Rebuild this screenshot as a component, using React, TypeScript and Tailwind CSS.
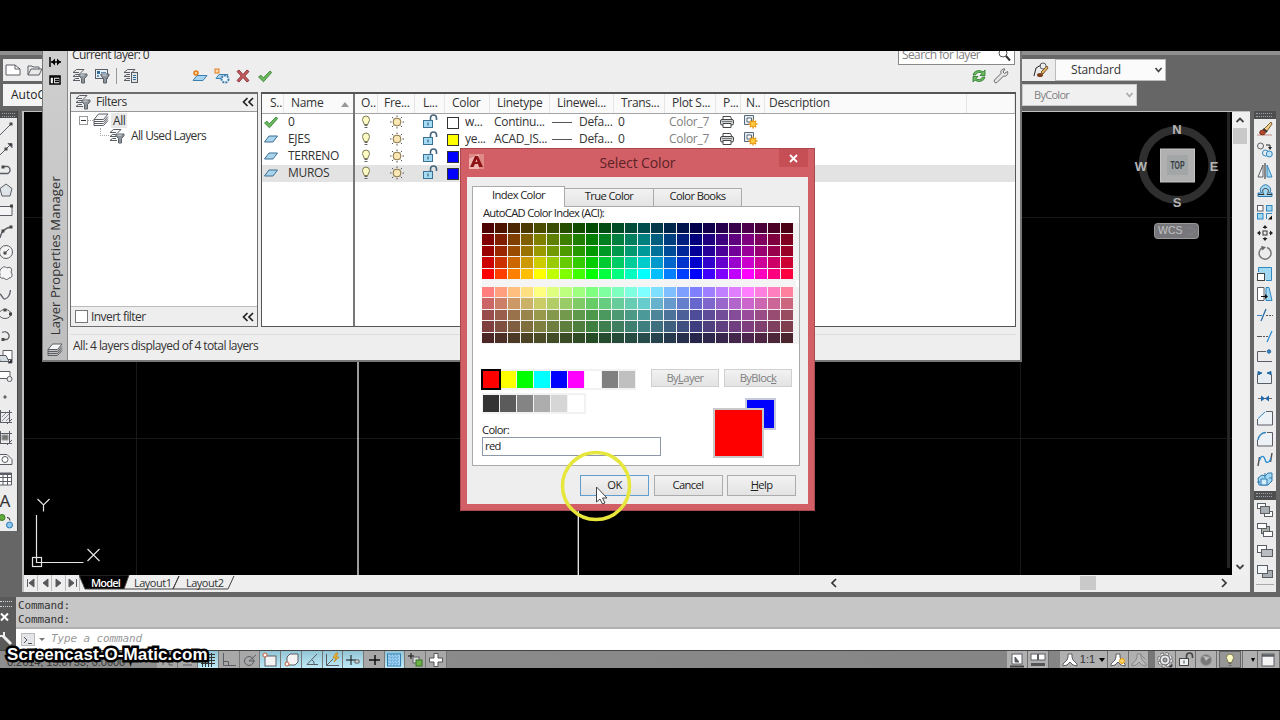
import React from 'react';
import clsx from 'clsx';

type IcoProps = { children: React.ReactNode; className?: string; w?: number; h?: number };

const Ico: React.FC<IcoProps> = ({ children, className, w = 16, h = 16 }) => (
    <svg width={w} height={h} viewBox={`0 0 ${w} ${h}`} fill="none" stroke="#5a5e64" strokeWidth="1" className={clsx('block shrink-0', className)}>
        {children}
    </svg>
);

// ---------- shared icons ----------

const Funnel = ({ x = 0, y = 0 }) => (
    <g transform={`translate(${x} ${y})`}>
        <path d="M1 1.5h8v1.800L6.500 6v4.500h-3V6L1 3.300z" fill="#8d949b" stroke="#5c6268" />
        <path d="M2.500 2.500h4" stroke="#dfe3e6" />
    </g>
);

const LayerFilter = () => (
    <Ico>
        <path d="M1 4.500L4.500 1.500H12L8.500 5M1 4.500h6M1 8.500l2.500-2H7M1 8.500h6M1 12.500l2.500-2H7M1 12.500h7" />
        <Funnel x={6} y={4.500} />
    </Ico>
);

const GroupFilter = () => (
    <Ico>
        <rect x="1.500" y="1.500" width="12" height="9" fill="#e8f1f8" />
        <rect x="3" y="3" width="3" height="3" fill="#2f6f9f" stroke="none" />
        <rect x="3" y="7" width="2" height="2" fill="#5f8fb5" stroke="none" />
        <path d="M7 4.500h5" stroke="#5f8fb5" />
        <Funnel x={6} y={4.500} />
    </Ico>
);

const LayerStates = () => (
    <Ico>
        <path d="M1 4.500L4.500 1.500H12L8.500 5M1 4.500h6M1 8.500l2.500-2H7M1 8.500h6M1 12.500l2.500-2H7M1 12.500h6" />
        <rect x="8.500" y="4.500" width="6" height="10" fill="#dfe3e6" />
        <path d="M10 7.500h3M10 9.500h3M10 11.500h3" stroke="#2f6f9f" />
    </Ico>
);

const NewLayer = () => (
    <Ico>
        <path d="M1 12.500l4-5h10l-4 5z" fill="#a6d3ef" stroke="#3f7fae" />
        <circle cx="4" cy="5" r="2" fill="#ffd08a" stroke="#e07b1f" strokeWidth="1.500" />
    </Ico>
);

const NewVpLayer = () => (
    <Ico>
        <rect x="1" y="1" width="4" height="4" fill="#ffd9a8" stroke="#e07b1f" />
        <path d="M2 10.500l3-4h9l-3 4z" fill="#a6d3ef" stroke="#3f7fae" />
        <circle cx="11" cy="11" r="3.500" fill="#eef6fb" stroke="#3f7fae" strokeDasharray="2 1" strokeWidth="2" />
    </Ico>
);

const RedCross = () => (
    <Ico>
        <path d="M2 3.500L4 2l4 4.500L12 2l2 1.500L9.800 8l4.200 4.500-2 1.500-4-4.500L4 14l-2-1.500L6.200 8z" fill="#c45a5e" stroke="#8e3a40" />
    </Ico>
);

const Check = () => (
    <Ico>
        <path d="M1.500 9L4 7.200l2.300 2.600L13 3l1.700 1.400L6.500 13.800z" fill="#6cb85f" stroke="#2f7d2c" strokeWidth=".8" />
    </Ico>
);

const LayerSheet = () => (
    <Ico h={10}>
        <path d="M1.500 8l4.500-6h8.500L10 8z" fill="#a8d4ee" stroke="#3f6f92" />
    </Ico>
);

const Bulb = () => (
    <Ico w={10} h={14}>
        <path d="M5 1a3.600 3.600 0 0 0-3.500 3.600c0 2 1.500 2.700 1.700 4.900h3.600c.2-2.200 1.700-2.900 1.700-4.900A3.600 3.600 0 0 0 5 1z" fill="#fdfbc4" stroke="#7d7a55" />
        <path d="M3.500 10.500h3M3.500 12.500h3" stroke="#666" />
    </Ico>
);

const Sun = () => (
    <Ico w={14} h={14}>
        <path d="M7 .5v1.500M7 12v1.500M0 7h1.500M12.500 7H14M2 2l1.300 1.300M10.700 10.700L12 12M2 12l1.300-1.300M10.700 3.300L12 2" stroke="#5c5a52" />
        <circle cx="7" cy="7" r="3.900" fill="#fbe7b4" stroke="#857142" />
    </Ico>
);

const Lock = ({ gray = false }) => (
    <Ico>
        <path d="M8.500 7V4a2.500 2.500 0 0 1 6 0v2" stroke={gray ? '#444' : '#44657c'} strokeWidth="1.600" />
        <rect x="1.500" y="6.500" width="9" height="7" fill={gray ? '#eee' : '#a5dcf5'} stroke={gray ? '#444' : '#3d7191'} />
        <path d="M6 8.500v3" stroke="#2b4b60" />
    </Ico>
);

const Printer = () => (
    <Ico>
        <path d="M4 6V2.500h7.500L13 6" fill="#fff" stroke="#444" />
        <rect x="1.500" y="5.500" width="13" height="5.500" rx="1.500" fill="#cfd3d6" stroke="#444" />
        <path d="M4 9.500h8v4H4z" fill="#fff" stroke="#444" />
        <path d="M3 7.500h10" stroke="#777" />
    </Ico>
);

const VpFreeze = () => (
    <Ico>
        <path d="M1.500 1.500h9v9h-9z" fill="#e7edf2" stroke="#56697a" />
        <path d="M4 4h4.500v4H4z" fill="#fff" stroke="#56697a" />
        <path d="M10 5.500v9M5.500 10h9M6.800 6.800l6.400 6.400M13.200 6.800l-6.400 6.400" stroke="#e79a1c" strokeWidth="1.400" />
        <circle cx="10" cy="10" r="2.800" fill="#ffc93c" stroke="#e79a1c" />
    </Ico>
);

const LayerStack = ({ className = '' }) => (
    <Ico className={className}>
        <path d="M1 7.500L5.500 2H15l-4.500 5.500z" fill="#f6f6f6" />
        <path d="M1 7.500v2h9.500L15 4.500M1 9.500v2h9.500L15 6.500M1 11.500v2h9.500L15 8.500" />
    </Ico>
);

const DoubleChevron = () => (
    <Ico w={12} h={10}>
        <path d="M5.500 1L1.500 5l4 4M11 1L7 5l4 4" stroke="#222" strokeWidth="1.700" />
    </Ico>
);

// ---------- draw toolbar ----------

const node = (x: number, y: number) => <rect x={x - 1} y={y - 1} width="2" height="2" fill="#555" stroke="#444" />;

const drawTools: React.ReactNode[] = [
    <><path d="M3 14L14 3" />{node(14, 3)}</>,
    <><path d="M3 14L14 3" />{node(9, 8)}<path d="M11 2.500h4v4z" fill="#333" /></>,
    <><path d="M3 11.500h8a4 4 0 0 0 0-7H7" strokeWidth="1.400" />{node(6, 5)}</>,
    <path d="M9 2l6 4.500L13 14H5L3 6.500z" fill="#dfe4e8" />,
    <><path d="M2 3.500h13v9H2z" fill="#f4f4f4" />{node(14.500, 3)}</>,
    <><path d="M3 14C4 8 8 4 14 3" strokeWidth="1.300" />{node(6, 7)}{node(14, 3)}</>,
    <><circle cx="9" cy="8" r="6.500" fill="#f3f3f3" />{node(8, 9)}<path d="M8 9l4-4" /></>,
    <path d="M5 3c2-2 4-1 5 0 3-2 6 1 4 4 2 3 1 6-2 6-1 2-4 2-5 0-3 1-5-1-4-4-1-2 0-5 2-6z" fill="#f4f4f4" />,
    <path d="M1 10c3-6 4 4 7 3s5-4 5.500-9" strokeWidth="1.300" />,
    <><ellipse cx="8" cy="8" rx="6" ry="4.500" />{node(13.500, 8)}{node(8, 4)}</>,
    <><path d="M5 5.500a4.500 4 0 1 1 5 7H7" strokeWidth="1.300" />{node(6, 12.500)}</>,
    <><path d="M6 2.500h9v9H6z" fill="#fff" /><path d="M2 7.500h7l3 6H3z" fill="#d4dce2" /><path d="M11 15l4-4v4z" fill="#111" /></>,
    <><path d="M2 3.500h11v7H2z" fill="#fff" /><circle cx="12.500" cy="11" r="2.500" fill="#eee" /></>,
    <circle cx="8" cy="8" r="1.200" fill="#777" />,
    <><path d="M3.500 1v13M1 3.500h14M12.500 1v12M1 13.500h14" /><path d="M5 12l7-7M5 8l4-4M9 12l3-3" stroke="#8a9096" /><path d="M10 15l5-5" /></>,
    <><path d="M3.500 1v13M1 3.500h14M12.500 1v12M1 13.500h14" /><path d="M5 5h6v5H5z" fill="#777" stroke="#999" /><path d="M10 15l5-5" /></>,
    <><path d="M2 3.500h8l5 5v5H2z" fill="#f4f4f4" /><circle cx="8" cy="8.500" r="3" fill="#fff" /></>,
    <><path d="M1.500 2h13v12h-13z" fill="#fff" /><path d="M1.500 3h13" strokeWidth="2" /><path d="M1.500 6.500h13M1.500 10.500h13M6 4v10M10.500 4v10" /></>,
    null,
    <><circle cx="5" cy="4.500" r="3" fill="#62ab3d" stroke="#3c7a22" /><path d="M10 4.500q3 0 3 3" stroke="#222" /><circle cx="12.500" cy="12" r="3" fill="#8cc8ef" stroke="#2f76ad" /></>,
];

// ---------- modify toolbar ----------

const modifyTools: React.ReactNode[] = [
    <><path d="M0 14h15" stroke="#c08a80" /><path d="M7 8l7-7 1 2-5 7z" fill="#f1cf8d" stroke="#7a5a2f" /><path d="M6 8l4 3" stroke="#333" strokeWidth="2" /><ellipse cx="5.500" cy="11.500" rx="2.800" ry="2.300" fill="#b5482c" stroke="#7c2e1b" /></>,
    <><circle cx="3.500" cy="4" r="3" /><path d="M9 3h4v3" stroke="#222" /><path d="M11 5h4l-2 3z" fill="#222" stroke="none" /><circle cx="8.500" cy="11" r="3" stroke="#3187c0" /><circle cx="12.300" cy="12" r="3" fill="#bfe3f7" stroke="#3187c0" /></>,
    <><path d="M6 2v12H1z" fill="#f2f2f2" /><path d="M8 0v16" stroke="#222" /><path d="M10 2v12h5z" fill="#a3d8f3" stroke="#3187c0" /></>,
    <><path d="M1 13.500h14V10h-2.500a5 5 0 1 0-8 0H1z" fill="#a3d8f3" stroke="#2c77ad" /><path d="M1 11.500h6C5 9 5 5.500 8.500 5.500S12 9 10 11.500h5" stroke="#333" /></>,
    <><rect x=".5" y="1.500" width="5.500" height="5.500" fill="#fff" /><rect x="9.500" y="1.500" width="5.500" height="5.500" fill="#a3d8f3" stroke="#3187c0" /><rect x=".5" y="9.500" width="5.500" height="5.500" fill="#a3d8f3" stroke="#3187c0" /><path d="M9.500 15V9.500H15" stroke="#3187c0" /><path d="M11 15.500l4-4v4z" fill="#111" stroke="none" /></>,
    <><rect x="6" y="6" width="4" height="4" stroke="#333" /><path d="M8 0l2.500 3h-5zM8 16l2.500-3h-5zM0 8l3-2.500v5zM16 8l-3-2.500v5z" fill="#222" stroke="none" /><path d="M8 2v2M8 12v2M2 8h2M12 8h2" stroke="#222" /></>,
    <><path d="M5 3a6 6 0 1 0 5-.5" stroke="#777" strokeWidth="1.500" /><path d="M4 1l5 1-3.500 3.500z" fill="#666" stroke="none" /></>,
    <><path d="M1.500 6V1.500h13v13H9" fill="#a3d8f3" stroke="#3187c0" /><rect x=".5" y="7.500" width="7" height="7" fill="#fff" stroke="#444" /></>,
    <><path d="M9 1.500h3l3 13H9z" fill="#a3d8f3" stroke="#3187c0" /><path d="M.5 1.500H7v13H.5z" fill="#fff" /><path d="M4 10.500h5" stroke="#111" /><path d="M8 8l3 2.500L8 13z" fill="#111" stroke="none" /></>,
    <><path d="M0 8.500h5" stroke="#3a83bd" /><path d="M9 8.500h7" stroke="#555" strokeDasharray="2 1" /><path d="M4 14L9 2" stroke="#2d6da3" strokeWidth="1.300" /></>,
    <><path d="M0 8.500h5" stroke="#555" /><path d="M6 8.500h6" stroke="#555" strokeDasharray="2 1" /><path d="M10 14l5-11" stroke="#2d8fd6" strokeWidth="1.300" /></>,
    <><path d="M9 3.500H.5v10H15" /><circle cx="12" cy="3.500" r="1.700" fill="#3187c0" stroke="#2c66a0" /></>,
    <><path d="M3 5.500H.5v9h14v-9H13" fill="#e6eef4" /><path d="M1 2.500l4 1.500-4 1.500zM14 2.500l-4 1.500 4 1.500z" fill="#1e67a8" stroke="#1e67a8" /></>,
    <><path d="M1 8.500h14" stroke="#666" /><path d="M4 5.500l4 3-4 3zM12 5.500l-4 3 4 3z" fill="#1e67a8" stroke="none" /></>,
    <><path d="M.5 9v6h15V1.500H9" fill="#edf2f6" /><path d="M1 8.500l7-6.500" stroke="#3187c0" /></>,
    <><path d="M.5 9v6h15V1.500H10" fill="#edf2f6" /><path d="M1 9a8 8 0 0 1 8-7.500" stroke="#3187c0" strokeWidth="1.400" /></>,
    <><path d="M1 14L2.500 5" stroke="#555" strokeWidth="1.500" /><path d="M13.500 10L15 1" stroke="#555" strokeWidth="1.500" /><path d="M2.500 8.500C4 3 7 3.500 8 7.500s4 4 6-1.500" stroke="#2d8fd6" strokeWidth="1.300" /></>,
    <><path d="M1 6l4-3 3 1 3-3h4v8l-4 4H2z" fill="#a3d8f3" stroke="#2c77ad" /><path d="M4 7h6v6H4z" fill="#d2effb" stroke="#2c77ad" /><path d="M0 10h3M12 6h3M8 1v5" stroke="#2c77ad" /></>,
];

const orderTools: React.ReactNode[] = [
    <><rect x=".5" y="1.500" width="8" height="5" fill="#fff" /><rect x="7.500" y="9.500" width="8" height="5" fill="#fff" /><rect x="3.500" y="4.500" width="9" height="7" fill="#a9aeb2" /></>,
    <><rect x="4.500" y="4.500" width="8" height="7" fill="#a9b0a4" /><rect x=".5" y="1.500" width="9" height="5" fill="#fff" /><rect x="6.500" y="9.500" width="9" height="5" fill="#fff" /></>,
    <><rect x=".5" y="2.500" width="9" height="7" fill="#fff" /><rect x="4.500" y="6.500" width="11" height="7" fill="#b9bdc0" /></>,
    <><rect x="5.500" y="6.500" width="10" height="7" fill="#a9aeb2" /><rect x=".5" y="1.500" width="10" height="8" fill="#f3f7fa" /></>,
];

const Grip = () => (
    <div className="flex h-2 items-center bg-[#4e4e4e] px-0.5">
        <div className="h-1 w-4 border-y border-dotted border-gray-400" />
    </div>
);

const DrawToolbar = () => (
    <div className="flex h-[420px] w-[18px] shrink-0 flex-col border-r border-[#444] bg-[#ececec]">
        <Grip />
        {drawTools.map((tool, i) => (
            <div key={i} className="-ml-[3px] flex h-[20.650px] shrink-0 items-center">
                {tool ? <Ico>{tool}</Ico> : <span className="w-4 text-center font-['Noto_Sans'] text-[17px] leading-none text-[#333]">A</span>}
            </div>
        ))}
    </div>
);

const ModifyToolbar = () => (
    <div className="flex h-[481px] w-[22px] shrink-0 flex-col bg-[#ececec]">
        <Grip />
        {modifyTools.map((tool, i) => (
            <div key={i} className="flex h-[20.650px] shrink-0 items-center justify-center"><Ico>{tool}</Ico></div>
        ))}
        <div className="h-[9px] bg-[#4e4e4e]"><Grip /></div>
        {orderTools.map((tool, i) => (
            <div key={i} className="flex h-[20.650px] shrink-0 items-center justify-center"><Ico>{tool}</Ico></div>
        ))}
        <div className="mx-0.5 mt-0.5 h-px bg-[#aaa]" />
    </div>
);

// ---------- drawing area ----------

const Drawing = () => (
    <svg width="1208" height="463" viewBox="24 112 1208 463" className="block shrink-0 bg-black">
        <path d="M24 217.500h1208M24 438.500h1208M136.500 112v463M799.500 112v463M1020.500 112v463" stroke="#181919" />
        <path d="M1228.500 112v456" stroke="#242424" strokeWidth="3" />
        <path d="M358 112v463M578.300 112v463" stroke="#f0f0f0" strokeWidth="1.300" />
        <g stroke="#e4e4e4" fill="none" strokeWidth="1.200">
            <path d="M36.500 515v47.500h47" />
            <rect x="32.500" y="557.500" width="9" height="9" />
            <path d="M37.500 499l6 6 6-6M43.500 505v6.500M87.500 549l12 12M99.500 549l-12 12" />
        </g>
        {/* view cube */}
        <circle cx="1177.500" cy="165" r="35" fill="none" stroke="#2f2f2f" strokeWidth="8" />
        <rect x="1160.500" y="149" width="34" height="33" fill="#b0b0b0" stroke="#c4c4c4" />
        <rect x="1167" y="155" width="21" height="20" fill="#a2a6a7" />
        <g fontFamily="Liberation Sans" fontWeight="700" textAnchor="middle" fill="#b5b5b5">
            <text x="1177.500" y="169" fontSize="10" fill="#333c42" textLength="14" lengthAdjust="spacingAndGlyphs">TOP</text>
            <text x="1177" y="134" fontSize="13">N</text>
            <text x="1177" y="207" fontSize="13">S</text>
            <text x="1141" y="171" fontSize="13">W</text>
            <text x="1214" y="171" fontSize="13">E</text>
        </g>
        <rect x="1154.500" y="223.500" width="44" height="15" rx="3" fill="#77777b" stroke="#9a9a9d" />
        <text x="1158" y="234" fontSize="10.500" fontFamily="Liberation Sans" fill="#c2c2c4">WCS</text>
        <path d="M1187 228h5l3 3-3 3h-5" fill="none" stroke="#838387" />
    </svg>
);

const navPaths = ['M3.500 2v8M10 2v8L5 6z', 'M10 2v8L5 6z', 'M4 2v8l5-4z', 'M3 2v8l5-4zM10.500 2v8'];

const ModelTabs = () => (
    <div className="flex h-4 items-center bg-[#eeeeee]">
        {navPaths.map((d) => (
            <div key={d} className="flex h-4 w-[14px] shrink-0 items-center justify-center border-r border-[#bbb]">
                <Ico w={14} h={12}><path d={d} fill="#555" /></Ico>
            </div>
        ))}
        <div className="relative -ml-px flex h-4 w-[192px] items-center text-[11px] tracking-[-0.500px] text-[#333]">
            <svg width="192" height="16" className="absolute left-0 top-0" fill="none" stroke="#444">
                <path d="M0 0h50l-5 14H6z" fill="#000" />
                <path d="M45 14h49l6-13M94 14l6-13M94 14h55l6-13" />
            </svg>
            <span className="absolute left-[12px] font-semibold tracking-[-0.800px] text-white">Model</span>
            <span className="absolute left-[55px]">Layout1</span>
            <span className="absolute left-[107px]">Layout2</span>
        </div>
        <div className="ml-auto flex h-4 w-[402px] items-center justify-between pr-0.5">
            <Ico w={8} h={10} className="ml-0.5"><path d="M6 1L2 5l4 4" stroke="#333" strokeWidth="1.700" /></Ico>
            <div className="ml-[118px] h-3.5 w-4 bg-[#c9c9c9]" />
            <Ico w={8} h={10}><path d="M2 1l4 4-4 4" stroke="#333" strokeWidth="1.700" /></Ico>
        </div>
        <div className="w-5" />
    </div>
);

const Workspace = () => (
    <div className="flex h-[481px]">
        <DrawToolbar />
        <div className="ml-1 flex w-[1228px] flex-col border-l-2 border-t border-[#c0c0c0] bg-[#eee]">
            <div className="flex h-[463px]">
                <Drawing />
                <div className="flex w-4 flex-col items-center bg-[#f0f0f0] py-1">
                    <Ico w={10} h={8}><path d="M1.500 6L5 2.500 8.500 6" stroke="#444" strokeWidth="1.800" /></Ico>
                    <div className="mt-1 h-4 w-3.5 bg-[#c9c9c9]" />
                    <Ico w={10} h={8} className="mt-auto"><path d="M1.500 2L5 5.500 8.500 2" stroke="#444" strokeWidth="1.800" /></Ico>
                </div>
            </div>
            <ModelTabs />
        </div>
        <div className="ml-1 shrink-0"><ModifyToolbar /></div>
    </div>
);

// ---------- toolbars above the drawing ----------

const TopToolbars = () => (
    <div className="flex h-[60px] justify-between border-t-4 border-[#8f8f8f] pt-1 text-xs tracking-[-0.150px]">
        <div className="flex w-[60px] flex-col gap-[3px] pl-[3px]">
            <div className="flex h-[22px] items-center gap-1.5 bg-[#ececec] pl-0.5">
                <Ico><path d="M1 3h9l5 4v6H1z" fill="#fff" /><path d="M10 3v4h5" /></Ico>
                <Ico><path d="M1 13V4h4l1 1h6v2" /><path d="M1 13l3-6h11l-3 6z" fill="#e9e9e9" /></Ico>
            </div>
            <div className="flex h-[22px] items-center bg-[#f4f4f4] pl-2 tracking-normal text-[#222]">AutoCAD</div>
        </div>
        <div className="flex w-[264px] flex-col gap-[3px] pl-1.5">
            <div className="flex h-[22px] w-[144px] items-center bg-[#ececec] pl-[11px]">
                <Ico className="mr-1.5"><path d="M1 14l2-8 5-3" stroke="#222" /><circle cx="10" cy="4" r="3" /><path d="M8 10l6-6 1 2-5 6z" fill="#e2b062" stroke="#7a5a2f" /><ellipse cx="7" cy="13" rx="3" ry="2" fill="#7c3f1c" stroke="none" /></Ico>
                <div className="flex h-full w-[112px] items-center justify-between border border-[#bbb] bg-[#fbfbfb] pl-[15px] pr-0.5 text-[#333]">
                    Standard
                    <Ico w={9} h={8}><path d="M1.500 2l3 3.500 3-3.500" stroke="#444" strokeWidth="1.700" /></Ico>
                </div>
            </div>
            <div className="flex h-[22px] w-[115px] items-center justify-between border border-[#ccc] bg-[#f0f0f0] pl-[11px] pr-0.5 text-[11px] tracking-[-0.700px] text-[#808080]">
                ByColor
                <Ico w={9} h={8}><path d="M1.500 2l3 3.500 3-3.500" stroke="#aaa" strokeWidth="1.700" /></Ico>
            </div>
        </div>
    </div>
);

// ---------- command line and status bar ----------

const CommandLine = () => (
    <div className="mt-[5px] flex h-[53px]">
        <div className="flex w-4 flex-col items-start justify-between bg-[#5a5a5a] pb-1 pt-1">
            <div className="h-1.5 w-3 border-y border-dotted border-gray-300" />
            <Ico w={10} h={10} className="-mt-1.5"><path d="M1 1.500l7 7M8 1.500l-7 7" stroke="#fff" strokeWidth="2" /></Ico>
            <Ico w={14} h={14}><path d="M3 4l8 8" stroke="#eee" strokeWidth="3" /><path d="M4 0v4H0" stroke="#eee" strokeWidth="2" /></Ico>
        </div>
        <div className="flex flex-1 flex-col font-['DejaVu_Sans_Mono','Liberation_Mono',monospace] text-[11px] tracking-[-0.120px] text-[#333]">
            <div className="h-[32px] border-b-2 border-[#b0b0b0] bg-[#c6c6c6] pl-0.5 pt-0.5 leading-[14px]">
                <p>Command:</p>
                <p>Command:</p>
            </div>
            <div className="flex flex-1 items-center bg-white pl-[5px]">
                <div className="flex h-[13px] w-3.5 items-center border border-[#bbb] bg-[#e3e5e8]">
                    <Ico w={12} h={10}><path d="M2 2l3 3-3 3M6 8.500h4" stroke="#555" /></Ico>
                </div>
                <div className="ml-1 h-0 w-0 border-x-[3px] border-t-[3px] border-x-transparent border-t-[#777]" />
                <span className="ml-[6px] italic text-[#999]">Type a command</span>
            </div>
        </div>
    </div>
);

const toggles: { on: boolean; icon: React.ReactNode }[] = [
    { on: false, icon: <path d="M4 3v10M2 9h6M10 9v4h4" /> },
    { on: false, icon: <path d="M3 5h9M3 9h9M3 13h9" /> },
    { on: true, icon: <path d="M1 2.500h14M1 5.500h14M1 8.500h14M1 11.500h14M2.500 1v14M5.500 1v14M8.500 1v14M11.500 1v14" stroke="#333" /> },
    { on: false, icon: <path d="M2.500 1v12.500H15M2.500 9.500h5v4" /> },
    { on: false, icon: <><circle cx="7" cy="9" r="4.500" /><path d="M14 3L7 9h6" /></> },
    { on: true, icon: <><rect x="3" y="4" width="11" height="10" fill="#f3f3f3" /><circle cx="3" cy="3" r="2" fill="#fff" stroke="#d05a3a" /></> },
    { on: true, icon: <><path d="M4 5l3-3h8v8l-3 3H4z" fill="#f3f3f3" /><circle cx="4" cy="12" r="2" fill="#fff" stroke="#d05a3a" /></> },
    { on: true, icon: <path d="M13 2L3 12.500h11M8 8q3 2 2 4" /> },
    { on: true, icon: <><path d="M2.500 2v11.500H15M3 13l6-6" /><path d="M12 1l-3 5h3l-2 4 5-5h-3l2-4z" fill="#f5b92e" stroke="#b97c11" strokeWidth=".7" /></> },
    { on: true, icon: <><path d="M6 3v10M1 8h10" stroke="#111" /><path d="M10 8h4v3h-4z" fill="#ddd" /></> },
    { on: false, icon: <path d="M9 3v10M3 8h11" stroke="#111" strokeWidth="1.500" /> },
    { on: true, icon: <><rect x="1.500" y="2" width="13" height="12" fill="#a6d6f3" stroke="#317db0" /><path d="M2 5h12M2 8h12M2 11h12M5 2v12M8 2v12M11 2v12" stroke="#5a9fd0" strokeDasharray="2 1" /></> },
    { on: false, icon: <><path d="M4 1v6M1 4h6" stroke="#111" /><rect x="6" y="5" width="6" height="6" fill="#ddd" /><rect x="9" y="8" width="6" height="6" fill="#6fb24c" stroke="#37731d" /></> },
    { on: false, icon: <path d="M6 1.500h4V6h4.500v4H10v4.500H6V10H1.500V6H6z" fill="#fff" stroke="#555" /> },
];

const person = 'M6 2h4v3l1 3 4 4v2l-4-1-3-3-3 3-4 1v-2l4-4 1-3z';

const StatusCell = ({ w, children }: { w: string; children: React.ReactNode }) => (
    <div className={clsx('flex h-full shrink-0 items-center justify-center border-r border-[#6e6e6e] bg-[#b0b0b0]', w)}>{children}</div>
);

const StatusBar = () => (
    <div className="flex h-[18px] items-center border-t border-[#444] bg-gradient-to-r from-[#8e8e8e] to-[#838383]">
        <span className="w-[157px] shrink-0 pl-[7px] pt-1.5 font-['Liberation_Sans'] text-[11px] leading-none tracking-[-0.050px] text-[#333]">0.2614, 15.0753, 0.0000</span>
        {toggles.map((t, i) => (
            <div key={i} className={clsx('flex h-full w-[20.700px] shrink-0 items-center justify-center border-r border-[#777]', t.on ? 'bg-gradient-to-b from-[#93c5d6] to-[#bfeaf7]' : 'bg-[#a8a8a8]')}>
                <Ico>{t.icon}</Ico>
            </div>
        ))}
        <div className="ml-auto flex h-full">
            <StatusCell w="w-[21px]"><Ico><rect x="3" y="2" width="10" height="10" fill="#fff" /><path d="M6 5v5h4z" fill="#555" /><path d="M1 14.500h14" stroke="#444" strokeWidth="2" /></Ico></StatusCell>
            <StatusCell w="w-[21px]"><Ico><rect x="1" y="2" width="6.500" height="6" fill="#fff" /><rect x="8.500" y="2" width="6.500" height="6" fill="#fff" /><path d="M1 12.500h14" stroke="#555" strokeWidth="3" /></Ico></StatusCell>
            <div className="w-[11px] bg-[#858585]" />
            <StatusCell w="w-[48px]">
                <Ico><path d={person} fill="#fff" /></Ico>
                <span className="ml-0.5 mr-1 font-['Liberation_Sans'] text-[11px] text-[#333]">1:1</span>
                <div className="h-0 w-0 border-x-[3.500px] border-t-[4px] border-x-transparent border-t-black" />
            </StatusCell>
            <StatusCell w="w-[21px]"><Ico><path d={person} fill="#fff" /><circle cx="12" cy="9" r="2.500" fill="#ffd55a" stroke="#e29b1a" /></Ico></StatusCell>
            <StatusCell w="w-[20px]"><Ico><path d={person} fill="#bbb" stroke="#888" /><path d="M9 2l5 5" stroke="#888" /></Ico></StatusCell>
            <div className="w-[6px] bg-[#777]" />
            <StatusCell w="w-[21px]">
                <Ico>
                    <circle cx="8" cy="8" r="6.300" fill="none" stroke="#555" strokeWidth="2.800" strokeDasharray="3 1.950" />
                    <circle cx="8" cy="8" r="6" fill="none" stroke="#eee" strokeWidth="2" strokeDasharray="2.500 2.210" />
                    <circle cx="8" cy="8" r="5" fill="#e8e8e8" />
                    <circle cx="8" cy="8" r="2" fill="#aaa" />
                    <path d="M12 15l3-3v3z" fill="#000" />
                </Ico>
            </StatusCell>
            <StatusCell w="w-[20px]"><Lock gray /></StatusCell>
            <StatusCell w="w-[21px]"><Ico><circle cx="8" cy="8" r="5.500" fill="#777" stroke="#999" /><path d="M5 4l3 5 4-4z" fill="#bbb" stroke="none" /></Ico></StatusCell>
            <StatusCell w="w-[26px]"><div className="flex h-full w-[22px] items-center justify-center border border-[#666] bg-[#969696]"><Bulb /></div></StatusCell>
            <StatusCell w="w-[15px]"><div className="ml-1.5 h-0 w-0 border-x-[2.500px] border-t-[4px] border-x-transparent border-t-black" /></StatusCell>
            <StatusCell w="w-[22px]"><Ico w={14} className="-ml-0.5"><rect x="1" y="2" width="12" height="12" fill="#f4f4f4" /><path d="M1 3.500h12" strokeWidth="2.500" /></Ico></StatusCell>
        </div>
    </div>
);

// ---------- layer properties manager ----------

const columns = [
    { label: 'S..', pad: 'pl-[8px]' },
    { label: 'Name', pad: 'pl-[7px]' },
    { label: 'O..', pad: 'pl-[7px]' },
    { label: 'Fre...', pad: 'pl-[6px]' },
    { label: 'L...', pad: 'pl-[8px]' },
    { label: 'Color', pad: 'pl-[7px]' },
    { label: 'Linetype', pad: 'pl-[7px]' },
    { label: 'Linewei...', pad: 'pl-[7px]' },
    { label: 'Trans...', pad: 'pl-[7px]' },
    { label: 'Plot S...', pad: 'pl-[7px]' },
    { label: 'P...', pad: 'pl-[7px]' },
    { label: 'N..', pad: 'pl-[5px]' },
    { label: 'Description', pad: 'pl-[4px]' },
    { label: '', pad: '' },
];

const layers = [
    { name: '0', swatch: 'bg-white', color: 'w...', linetype: 'Continu...', current: true, selected: false },
    { name: 'EJES', swatch: 'bg-[#ffff00]', color: 'ye...', linetype: 'ACAD_IS...', current: false, selected: false },
    { name: 'TERRENO', swatch: 'bg-[#0000ff]', color: '', linetype: '', current: false, selected: false },
    { name: 'MUROS', swatch: 'bg-[#0000ff]', color: '', linetype: '', current: false, selected: true },
];

const gridCols = 'grid grid-cols-[22px_70px_24px_37px_30px_45px_60px_64px_51px_51px_25px_24px_202px_48px] whitespace-nowrap';

const LayerTable = () => (
    <div className="relative h-[235px] w-[755px] shrink-0 border border-[#555] border-t-2 bg-white text-xs tracking-[-0.300px]">
        <div className={clsx(gridCols, 'h-[20px] border-b border-[#a5a5a5] bg-[#fafafa] leading-[18px]')}>
            {columns.map((c, i) => (
                <div key={i} className={clsx('relative border-r border-[#e6e6e6]', c.pad)}>
                    {c.label}
                    {c.label === 'Name' && <div className="absolute right-1 top-2 h-0 w-0 border-x-4 border-b-[5px] border-x-transparent border-b-[#999]" />}
                </div>
            ))}
        </div>
        {layers.map((l) => (
            <div key={l.name} className={clsx(gridCols, 'h-[17px] items-center pb-px leading-[16px]', l.selected && 'bg-[#e3e3e3]')}>
                <div className="pl-px">{l.current ? <Check /> : <LayerSheet />}</div>
                <div className="pl-1">{l.name}</div>
                <div className="flex justify-center"><Bulb /></div>
                <div className="flex justify-center"><Sun /></div>
                <div className="flex justify-center"><Lock /></div>
                <div className="flex items-center gap-1.5 pl-0.5">
                    <div className={clsx('mt-px h-3 w-3 shrink-0 border border-[#333]', l.swatch)} />
                    {l.color}
                </div>
                {l.linetype && (
                    <>
                        <div className="pl-1">{l.linetype}</div>
                        <div className="flex items-center gap-[7px] pl-0.5"><div className="h-px w-5 bg-[#555]" />Defa...</div>
                        <div className="pl-1">0</div>
                        <div className="pl-1 text-[#808080]">Color_7</div>
                        <div className="pl-[3px]"><Printer /></div>
                        <div className="pl-[2px]"><VpFreeze /></div>
                    </>
                )}
            </div>
        ))}
        <div className="absolute bottom-0 left-[91px] top-0 w-[2px] bg-[#777]" />
    </div>
);

const FilterPanel = () => (
    <div className="flex h-[235px] w-[188px] shrink-0 flex-col border border-[#6d6d6d] border-t-2 bg-white">
        <div className="flex h-[18px] items-center border-b border-[#999] bg-[#eee] pb-px pl-1 pr-[3px]">
            <LayerFilter />
            <span className="ml-[5px]">Filters</span>
            <div className="ml-auto"><DoubleChevron /></div>
        </div>
        <div className="flex-1 pl-2">
            <div className="flex h-4 items-center">
                <div className="flex h-[9px] w-[9px] items-center justify-center border border-[#999]"><div className="h-px w-[5px] bg-[#333]" /></div>
                <div className="w-[5px] border-t border-dotted border-[#aaa]" />
                <LayerStack />
                <span className="ml-[2px] bg-[#e8e8e8] px-0.5 leading-[15px]">All</span>
            </div>
            <div className="ml-[21px] flex h-[15px] items-center">
                <div className="mb-2 h-[8px] w-[9px] border-b border-l border-dotted border-[#aaa]" />
                <LayerFilter />
                <span className="ml-[6px] tracking-[-0.650px]">All Used Layers</span>
            </div>
        </div>
        <div className="flex h-[20px] items-center border-t border-[#bbb] bg-[#eee] pl-1 pr-[3px]">
            <div className="h-[13px] w-[13px] border border-[#777] bg-white" />
            <span className="ml-[3px] tracking-[-0.550px]">Invert filter</span>
            <div className="ml-auto"><DoubleChevron /></div>
        </div>
    </div>
);

const LayerPalette = () => (
    <div className="absolute left-[42px] top-[51px] flex h-[311px] w-[980px] overflow-hidden border-b-2 border-l border-r-2 border-[#777] bg-[#eeeeee] text-xs tracking-[-0.450px] text-[#333]">
        <div className="flex w-[25px] shrink-0 flex-col items-center border-r border-[#888] bg-gradient-to-b from-[#cfcfcf] to-[#bebebe] pb-px">
            <Ico w={14} h={12} className="mt-[5px]"><path d="M2 1v10M13 6H3" stroke="#000" strokeWidth="1.500" /><path d="M7 2.500v7L3.500 6zM9 2.500v7L12.500 6z" fill="#000" stroke="none" /></Ico>
            <Ico w={12} h={10} className="mt-[7px]"><rect x="1" y="1" width="10" height="8" fill="#fff" stroke="#000" strokeWidth="1.500" /><path d="M1 2h10M4.500 2v7M6 4.500h4M6 6.500h4" stroke="#000" strokeWidth="1.300" /></Ico>
            <div className="mt-auto flex h-[172px] w-5 items-center justify-center">
                <span className="-rotate-90 whitespace-nowrap text-[13px] tracking-[0.100px] text-[#333]">Layer Properties Manager</span>
            </div>
            <LayerStack className="mb-px" />
        </div>
        <div className="flex flex-1 flex-col pl-[2px]">
            <div className="relative flex h-[15px] shrink-0 items-start pl-0.5">
                <span className="mt-[-5px] leading-[17px] tracking-[-0.600px]">Current layer: 0</span>
                <div className="absolute right-[5px] top-[-6px] flex h-5 w-[117px] items-center justify-between border border-[#888] bg-white pl-[3px] pr-[3px] tracking-[-0.600px] text-[#808080]">
                    Search for layer
                    <Ico w={13} h={14}><circle cx="5" cy="5" r="4" stroke="#555" /><path d="M8 8l4 4.500" stroke="#333" strokeWidth="2" /></Ico>
                </div>
            </div>
            <div className="flex h-[26px] shrink-0 items-start pt-0.5">
                <div className="flex w-[122px] items-center gap-[6px] pl-[2px]">
                    <LayerFilter /><GroupFilter />
                    <div className="h-4 w-px bg-[#999]" />
                    <LayerStates />
                </div>
                <div className="flex items-center gap-[5.500px]"><NewLayer /><NewVpLayer /><RedCross /><Check /></div>
                <div className="ml-auto mr-[11px] flex gap-1.5">
                    <Ico><path d="M2 7a6 5.500 0 0 1 10-3l2-2v5.500H9l2-2A4 4 0 0 0 4.500 7zM14 9a6 5.500 0 0 1-10 3l-2 2V8.500h5l-2 2A4 4 0 0 0 11.500 9z" fill="#6fbf60" stroke="#25732a" strokeWidth=".8" /></Ico>
                    <Ico><path d="M14.500 3.500l-3 2-1.500-1.500L12 1c-3-.5-5 2-4 4.500L1.500 12a1.800 1.800 0 0 0 2.500 2.500L10.500 8c2.500 1 5-1.500 4-4.500z" fill="#e4e6e8" stroke="#666" /></Ico>
                </div>
            </div>
            <div className="flex shrink-0 gap-[3px]">
                <FilterPanel />
                <LayerTable />
            </div>
            <div className="mr-1 mt-[7px] border-t border-[#ddd] pl-[3px] pt-0.5 leading-[18px] tracking-[-0.570px]">All: 4 layers displayed of 4 total layers</div>
        </div>
    </div>
);

// ---------- select color dialog ----------

function hsv(h: number, s: number, v: number) {
    const f = (n: number) => {
        const k = (n + h / 60) % 6;
        return Math.floor(255 * (v - v * s * Math.max(0, Math.min(k, 4 - k, 1))));
    };
    return `rgb(${f(5)}, ${f(3)}, ${f(1)})`;
}

const hues = Array.from({ length: 24 }, (_, i) => i * 15);

const ColorBlock = ({ sat, values }: { sat: number; values: number[] }) => (
    <div className="grid h-[57px] grid-cols-[repeat(24,13px)] grid-rows-5 bg-[#f2f2f2]">
        {values.map((v) => hues.map((h) => (
            <div key={`${v}-${h}`} className="border-b border-r border-[#f2f2f2]" style={{ backgroundColor: hsv(h, sat, v) }} />
        )))}
    </div>
);

const basic = ['bg-[#ff0000]', 'bg-[#ffff00]', 'bg-[#00ff00]', 'bg-[#00ffff]', 'bg-[#0000ff]', 'bg-[#ff00ff]', 'bg-white', 'bg-[#808080]', 'bg-[#c0c0c0]'];
const grays = ['bg-[#333333]', 'bg-[#5b5b5b]', 'bg-[#848484]', 'bg-[#adadad]', 'bg-[#d6d6d6]', 'bg-white'];

const Button = ({ w, children, className }: { w: string; children: React.ReactNode; className?: string }) => (
    <button className={clsx('flex shrink-0 items-center justify-center border bg-gradient-to-b from-[#f2f2f2] to-[#e3e3e3]', w, className)}>
        <span>{children}</span>
    </button>
);

const ColorDialog = () => (
    <div className="absolute left-[460px] top-[148px] flex h-[363px] w-[355px] flex-col border border-[#a8494f] bg-[#d25f66] px-[6px] pb-[6px] text-[11.200px] tracking-[-0.620px] text-[#222]">
        <div className="flex h-[28px] items-center">
            <svg width="15" height="15" className="-mt-1 ml-0.5">
                <rect width="15" height="15" fill="#e08a88" />
                <path d="M0 15V5L10 0v15z" fill="#efb5b2" />
                <path d="M1 13L6 2h3l5 11h-4l-1-3H6l-1.500 3zM6.500 8h2l-1-3z" fill="#8c1216" />
            </svg>
            <span className="ml-[12px] flex-1 pb-[2px] text-center text-[14px] tracking-[-0.100px] text-[#5b2226]">Select Color</span>
            <div className="mb-[10px] flex h-[18px] w-[29px] items-center justify-center bg-[#c64f55]">
                <Ico w={9} h={9}><path d="M1 1l7 7M8 1L1 8" stroke="#fff" strokeWidth="1.800" /></Ico>
            </div>
        </div>
        <div className="flex flex-1 flex-col bg-[#eeeeee] px-[5px] pt-[9px]">
            <div className="flex h-[20px] items-end">
                <div className="z-10 -mb-px flex h-[21px] w-[93px] items-center justify-center border border-b-0 border-[#aaa] bg-white pb-1">Index Color</div>
                <div className="-ml-px flex h-[18px] w-[90px] items-center justify-center border border-b-0 border-[#aaa] bg-gradient-to-b from-[#f2f2f2] to-[#e4e4e4] pb-0.5">True Color</div>
                <div className="-ml-px flex h-[18px] w-[89px] items-center justify-center border border-b-0 border-[#aaa] bg-gradient-to-b from-[#f2f2f2] to-[#e4e4e4] pb-0.5">Color Books</div>
            </div>
            <div className="flex h-[260px] w-[328px] flex-col border border-[#aaa] bg-white pl-[9px]">
                <p className="h-[16px] pl-px leading-[12px] tracking-[-0.700px]">AutoCAD Color Index (ACI):</p>
                <ColorBlock sat={1} values={[0.3, 0.5, 0.6, 0.8, 1]} />
                <div className="h-[7px] w-[314px] bg-[#f5f5f5]" />
                <ColorBlock sat={0.5} values={[1, 0.8, 0.6, 0.5, 0.3]} />
                <div className="mt-[25px] flex justify-between pr-[7px]">
                    <div>
                        <div className="flex w-[154px] bg-[#f2f2f2] py-0.5 pl-px">
                            {basic.map((c, i) => (
                                <div key={c} className={clsx('mr-px h-[17px] w-4 shrink-0', c, i === 0 && 'z-10 outline-2 outline-black')} />
                            ))}
                        </div>
                        <div className="mt-[3px] flex w-[104px] bg-[#f2f2f2] py-0.5 pl-px">
                            {grays.map((c) => <div key={c} className={clsx('mr-px h-[17px] w-4 shrink-0', c)} />)}
                        </div>
                    </div>
                    <div className="flex h-[18px] gap-[5px] text-[#808080]">
                        <Button w="w-[68px]" className="border-[#d0d0d0]">By<u>L</u>ayer</Button>
                        <Button w="w-[68px]" className="border-[#d0d0d0]">ByBloc<u>k</u></Button>
                    </div>
                </div>
                <div className="relative mt-[9px]">
                    <p className="leading-[14px]">Color:</p>
                    <div className="flex h-[19px] w-[179px] items-center border border-[#8d97a8] bg-white pl-0.5">red</div>
                    <div className="absolute right-[23px] top-[-25px] h-[32px] w-[31px] border-2 border-[#c9c9dd] bg-[#0000ff]" />
                    <div className="absolute right-[35px] top-[-15px] h-[50px] w-[51px] border-2 border-[#c9c9c9] bg-[#ff0000]" />
                </div>
            </div>
            <div className="mt-[9px] flex h-[21px] justify-end gap-[4.500px] pr-[7px]">
                <Button w="w-[69px]" className="border-[#5d9fd0]">OK</Button>
                <Button w="w-[69px]" className="border-[#acacac]">Cancel</Button>
                <Button w="w-[69px]" className="border-[#acacac]"><u>H</u>elp</Button>
            </div>
        </div>
    </div>
);

const App: React.FC = () => {
    return (
        <div className="relative h-[720px] w-[1280px] overflow-hidden bg-black pt-[51px] font-['Open_Sans','Noto_Sans',sans-serif]">
            <div className="flex h-[617px] flex-col bg-[#666666]">
                <TopToolbars />
                <Workspace />
                <CommandLine />
                <StatusBar />
            </div>
            <LayerPalette />
            <ColorDialog />
            {/* pointer with its highlight ring */}
            <svg width="72" height="72" className="absolute left-[560px] top-[450px]">
                <circle cx="36" cy="36" r="33.500" fill="none" stroke="#e6e63c" strokeWidth="3.500" />
                <path d="M36.500 37v15l3.500-3 2.500 5 2.500-1-2.500-5h4.500z" fill="#fff" stroke="#444" />
            </svg>
            <div className="absolute left-[7px] top-[644px] font-['Liberation_Sans',sans-serif] text-[17px] font-bold leading-[22px] tracking-[0.100px] text-white [paint-order:stroke_fill] [-webkit-text-stroke:5px_black]">
                Screencast-O-Matic.com
            </div>
        </div>
    );
};

export default App;
